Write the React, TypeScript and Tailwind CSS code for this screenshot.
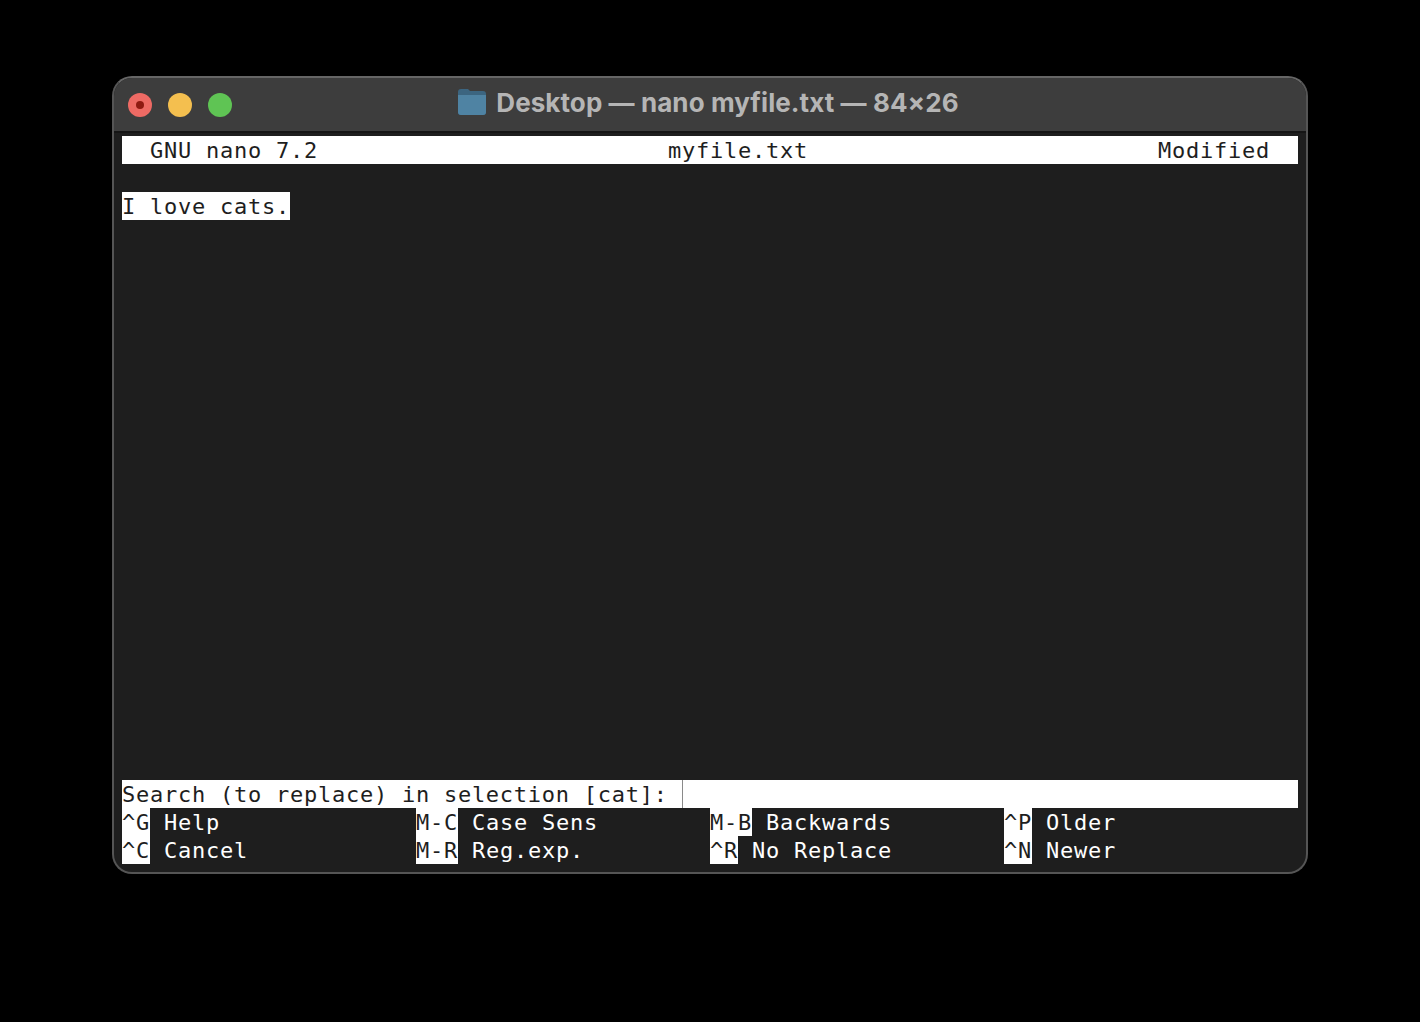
const mono = "font-['DejaVu_Sans_Mono',monospace]";

function Key({ label }: { label: string }) {
  return <span className="h-7 bg-white text-[#1e1e1e]">{label}</span>;
}

function Shortcut({ keys, text }: { keys: string; text: string }) {
  return (
    <div className="flex h-7 w-[294px] whitespace-pre">
      <Key label={keys} />
      <span className="text-white"> {text}</span>
    </div>
  );
}

function FolderIcon() {
  return (
    <svg width="28" height="26" viewBox="0 0 28 26" className="mr-[10px]">
      <path d="M0 3 C0 1 1 0 3 0 H10 L12 2 H25 C27 2 28 3 28 5 V23 C28 25 27 26 25 26 H3 C1 26 0 25 0 23 Z" fill="#3c6580" />
      <path d="M0 6 H28 V23 C28 25 27 26 25 26 H3 C1 26 0 25 0 23 Z" fill="#4f83a3" />
    </svg>
  );
}

export default function App() {
  return (
    <div className="flex h-[1022px] w-[1420px] justify-center bg-black pt-[76px]">
      <div className="flex h-[798px] w-[1196px] flex-col overflow-hidden rounded-[20px] border-2 border-[#555555] border-t-[#666666] bg-[#1e1e1e]">
        <div className="relative flex h-[53px] shrink-0 items-center bg-[#3d3d3d] pl-[14px]">
          <div className="flex gap-4">
            <div className="flex h-6 w-6 items-center justify-center rounded-full bg-[#ee6a64]">
              <div className="h-2 w-2 rounded-full bg-[#8f1a12]" />
            </div>
            <div className="h-6 w-6 rounded-full bg-[#f4bf4f]" />
            <div className="h-6 w-6 rounded-full bg-[#5fc454]" />
          </div>
          <div className="absolute inset-0 flex items-center justify-center pb-[5px] pr-[3px]">
            <FolderIcon />
            <span className="font-['Inter',sans-serif] text-[26px] font-bold tracking-[0.08px] text-[#b5b5b5]">
              Desktop — nano myfile.txt — 84×26
            </span>
          </div>
        </div>
        <div className="h-[2px] shrink-0 bg-[#151515]" />
        <div className={`${mono} flex flex-1 flex-col px-2 pt-[3px] text-[22px] leading-[30px] tracking-[0.75px]`}>
          <div className="flex h-7 whitespace-pre bg-white pr-7 text-[#1e1e1e]">
            <span className="w-[546px] pl-7">GNU nano 7.2</span>
            <span className="flex-1">myfile.txt</span>
            <span>Modified</span>
          </div>
          <div className="h-7" />
          <div className="flex h-7">
            <span className="h-7 bg-white text-[#1e1e1e]">I love cats.</span>
          </div>
          <div className="flex-1" />
          <div className="flex h-7 whitespace-pre bg-white text-[#1e1e1e]">
            <span className="w-[560px]">Search (to replace) in selection [cat]:</span>
            <span className="h-7 w-px bg-[#8a8a8a]" />
          </div>
          <div className="flex h-7">
            <Shortcut keys="^G" text="Help" />
            <Shortcut keys="M-C" text="Case Sens" />
            <Shortcut keys="M-B" text="Backwards" />
            <Shortcut keys="^P" text="Older" />
          </div>
          <div className="flex h-7">
            <Shortcut keys="^C" text="Cancel" />
            <Shortcut keys="M-R" text="Reg.exp." />
            <Shortcut keys="^R" text="No Replace" />
            <Shortcut keys="^N" text="Newer" />
          </div>
          <div className="h-2 shrink-0" />
        </div>
      </div>
    </div>
  );
}
